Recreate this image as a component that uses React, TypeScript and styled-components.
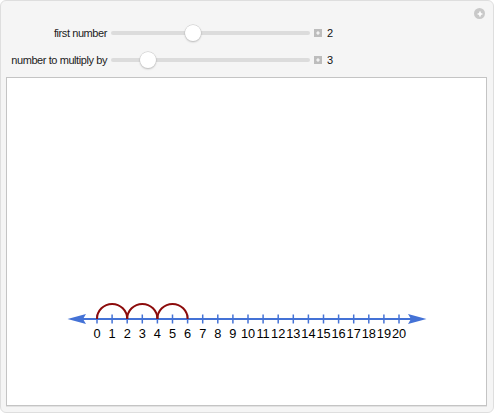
import React from "react";
import styled, { createGlobalStyle } from "styled-components";

const Global = createGlobalStyle`
  html, body { margin: 0; padding: 0; background: #ffffff; }
  body { font-family: "Liberation Sans", Arial, sans-serif; }
`;

const Panel = styled.div`
  position: relative;
  box-sizing: border-box;
  width: 494px;
  height: 413px;
  background: #f5f5f5;
  border: 1px solid #dedede;
  border-radius: 6px;
  padding: 21px 6px 6px 5px;
  display: flex;
  flex-direction: column;
`;

const CloseButton = styled.div`
  position: absolute;
  top: 7px;
  right: 8px;
  width: 11px;
  height: 11px;
  border-radius: 50%;
  background: #c9c9c9;
  display: flex;
  align-items: center;
  justify-content: center;
`;

const Controls = styled.div`
  display: flex;
  flex-direction: column;
  gap: 5px;
`;

const Row = styled.div`
  display: grid;
  grid-template-columns: 101px 199px 8px auto;
  column-gap: 4px;
  align-items: center;
  height: 22px;
`;

const Label = styled.span`
  font-size: 11px;
  letter-spacing: -0.42px;
  color: #222;
  text-align: right;
  white-space: nowrap;
`;

const Track = styled.div`
  position: relative;
  height: 4px;
  border-radius: 2px;
  background: #dcdcdc;
`;

const Thumb = styled.div`
  position: absolute;
  top: 50%;
  width: 16px;
  height: 16px;
  margin: -8px 0 0 -8px;
  border-radius: 50%;
  background: #ffffff;
  box-shadow: 0 0 0 0.5px #c8c8c8, 0 1px 2px rgba(0, 0, 0, 0.25);
`;

const PlusBox = styled.div`
  width: 8px;
  height: 8px;
  background: #bdbdbd;
  display: flex;
  align-items: center;
  justify-content: center;
`;

const Value = styled.span`
  font-size: 11px;
  color: #111;
  margin-left: 1px;
`;

const Frame = styled.div`
  margin-top: 6px;
  flex: 1;
  background: #ffffff;
  border: 1px solid #c4c4c4;
  box-shadow: 0 1px 0 #e2e2e2;
  display: flex;
`;

const Plot = styled.svg`
  width: 100%;
  height: 100%;
  display: block;
`;

const PlusGlyph: React.FC<{ size: number }> = ({ size }) => (
  <svg width={size} height={size} viewBox="0 0 10 10">
    <path d="M5 2 V8 M2 5 H8" stroke="#fff" strokeWidth="2" />
  </svg>
);

const SliderRow: React.FC<{ label: string; value: number; frac: number }> = ({
  label,
  value,
  frac,
}) => (
  <Row>
    <Label>{label}</Label>
    <Track>
      <Thumb style={{ left: `${frac * 100}%` }} />
    </Track>
    <PlusBox>
      <PlusGlyph size={6} />
    </PlusBox>
    <Value>{value}</Value>
  </Row>
);

const NumberLine: React.FC<{ first: number; times: number }> = ({ first, times }) => {
  const x0 = 90;
  const step = 15.1;
  const y = 241;
  const blue = "#4472d6";
  const red = "#8c0b0b";
  const xs = Array.from({ length: 21 }, (_, i) => x0 + i * step);
  const arcs = Array.from({ length: times }, (_, k) => {
    const a = x0 + k * first * step;
    const b = x0 + (k + 1) * first * step;
    const r = (b - a) / 2;
    return `M${a} ${y} A${r} ${r} 0 0 1 ${b} ${y}`;
  });
  return (
    <Plot viewBox="0 0 479 327" preserveAspectRatio="none">
      <line x1={70} y1={y} x2={410} y2={y} stroke={blue} strokeWidth={2} />
      <path d={`M60.5 ${y} L79 ${y - 5} L76 ${y} L79 ${y + 5} Z`} fill={blue} />
      <path d={`M419.5 ${y} L401 ${y - 5} L404 ${y} L401 ${y + 5} Z`} fill={blue} />
      {xs.map((x, i) => (
        <line key={i} x1={x} y1={y - 4.5} x2={x} y2={y + 4.5} stroke={blue} strokeWidth={1.5} />
      ))}
      {arcs.map((d, i) => (
        <path key={i} d={d} fill="none" stroke={red} strokeWidth={2} />
      ))}
      {xs.map((x, i) => (
        <text
          key={i}
          x={x}
          y={259.5}
          textAnchor="middle"
          fontSize="12.8"
          fontFamily='"Liberation Sans", Arial, sans-serif'
          fill="#000"
        >
          {i}
        </text>
      ))}
    </Plot>
  );
};

export default function App() {
  return (
    <>
      <Global />
      <Panel>
        <CloseButton>
          <PlusGlyph size={8} />
        </CloseButton>
        <Controls>
          <SliderRow label="first number" value={2} frac={82 / 199} />
          <SliderRow label="number to multiply by" value={3} frac={37 / 199} />
        </Controls>
        <Frame>
          <NumberLine first={2} times={3} />
        </Frame>
      </Panel>
    </>
  );
}
